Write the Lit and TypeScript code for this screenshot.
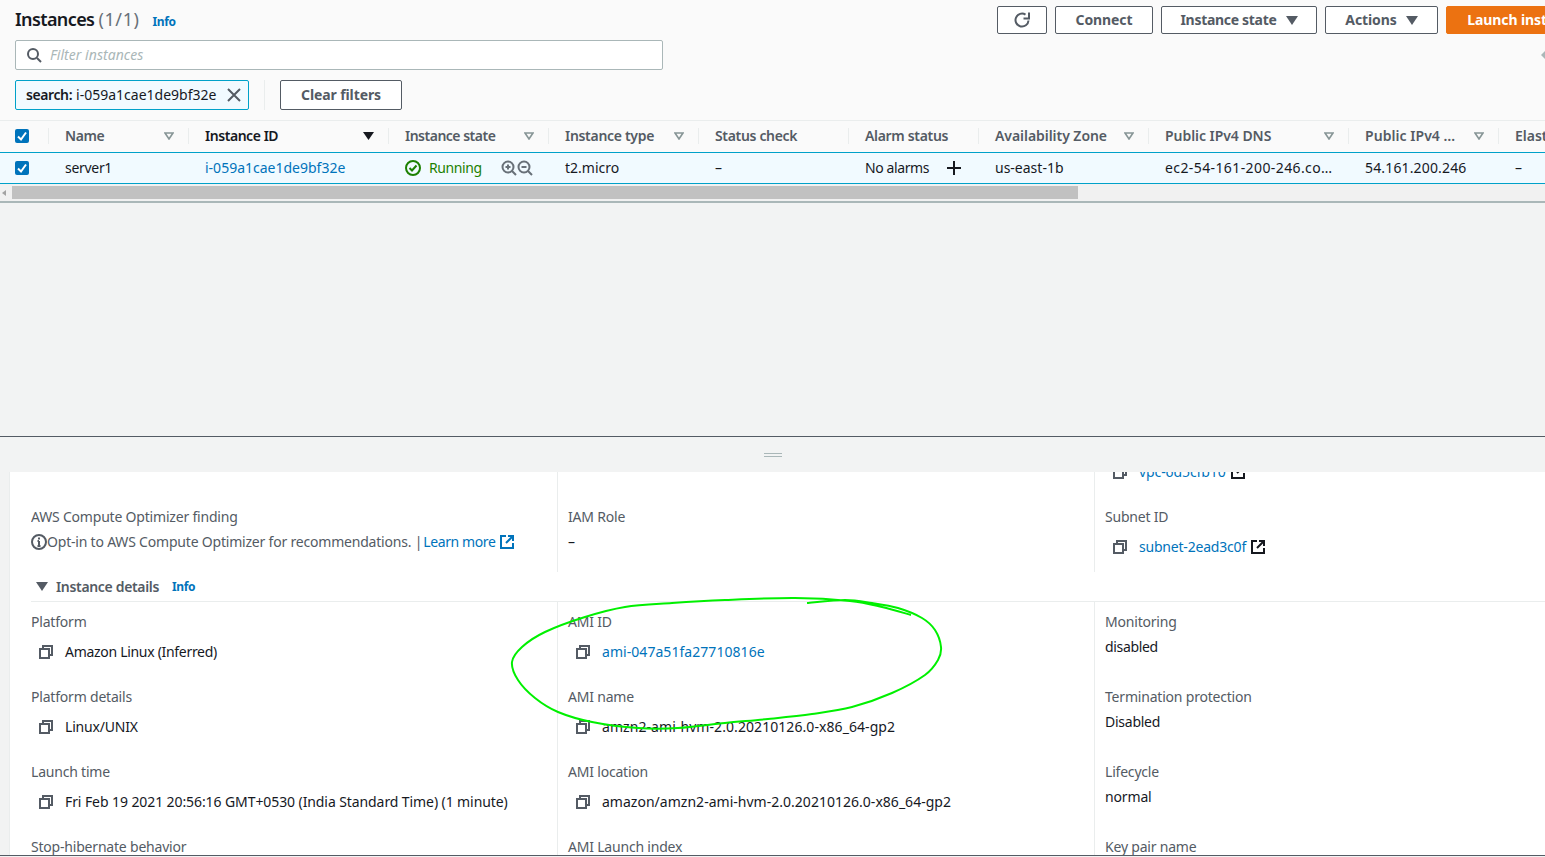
import { LitElement, html, css, svg } from "lit";
import { customElement } from "lit/decorators.js";

const copyIcon = html`<svg class="ic copy" viewBox="0 0 14 14" width="14" height="14" fill="none" stroke="#545b64" stroke-width="2"><rect x="1" y="4" width="9" height="9"/><path d="M4 4V1h9v9h-3"/></svg>`;
const extIcon = (c: string) => html`<svg class="ic" viewBox="0 0 14 14" width="14" height="14" fill="none" stroke=${c} stroke-width="2"><path d="M6 1H1v12h12V8"/><path d="M8 1h5v5M13 1L6 8"/></svg>`;
const filterIcon = html`<svg class="ic" viewBox="0 0 10 8" width="10" height="8" fill="none" stroke="#879596" stroke-width="1.6"><path d="M1 1h8L5 7z"/></svg>`;
const caret = (c: string, w = 10, h = 8) => html`<svg class="ic" viewBox="0 0 10 8" width=${w} height=${h} preserveAspectRatio="none"><path d="M0 0h10L5 8z" fill=${c}/></svg>`;
const check = html`<span class="cb"><svg viewBox="0 0 14 14" width="14" height="14" fill="none" stroke="#fff" stroke-width="2"><path d="M3 7.5l3 3 5-7"/></svg></span>`;
const ls = (v: number) => `letter-spacing:${v}px`;

type Col = { w: number; t: string; sort: "filter" | "active" | "none"; s: number };
const cols: Col[] = [
  { w: 140, t: "Name", sort: "filter", s: -0.4 },
  { w: 200, t: "Instance ID", sort: "active", s: -0.45 },
  { w: 160, t: "Instance state", sort: "filter", s: -0.5 },
  { w: 150, t: "Instance type", sort: "filter", s: -0.3 },
  { w: 150, t: "Status check", sort: "none", s: -0.33 },
  { w: 130, t: "Alarm status", sort: "none", s: -0.33 },
  { w: 170, t: "Availability Zone", sort: "filter", s: -0.05 },
  { w: 200, t: "Public IPv4 DNS", sort: "filter", s: -0.05 },
  { w: 150, t: "Public IPv4 …", sort: "filter", s: 0.05 },
  { w: 200, t: "Elastic IP", sort: "none", s: 0 },
];
const template = "48px " + cols.map((c) => c.w + "px").join(" ");

type Item = { l: string; v: string; copy?: boolean; link?: boolean; s?: number };
const rows: Item[] = [
  { l: "Platform", v: "Amazon Linux (Inferred)", copy: true, s: -0.3 },
  { l: "AMI ID", v: "ami-047a51fa27710816e", copy: true, link: true, s: 0.05 },
  { l: "Monitoring", v: "disabled", s: -0.35 },
  { l: "Platform details", v: "Linux/UNIX", copy: true, s: -0.2 },
  { l: "AMI name", v: "amzn2-ami-hvm-2.0.20210126.0-x86_64-gp2", copy: true, s: 0.07 },
  { l: "Termination protection", v: "Disabled", s: -0.25 },
  { l: "Launch time", v: "Fri Feb 19 2021 20:56:16 GMT+0530 (India Standard Time) (1 minute)", copy: true, s: -0.09 },
  { l: "AMI location", v: "amazon/amzn2-ami-hvm-2.0.20210126.0-x86_64-gp2", copy: true, s: 0.02 },
  { l: "Lifecycle", v: "normal", s: -0.15 },
  { l: "Stop-hibernate behavior", v: "" },
  { l: "AMI Launch index", v: "" },
  { l: "Key pair name", v: "" },
];

const inkLoop: [number, number][] = [
  [911, 615], [882, 607], [850, 601], [795, 598], [725, 600], [672, 603], [625, 607], [585, 617], [545, 632],
  [522, 647], [512, 662], [518, 680], [535, 698], [558, 712], [592, 722], [638, 728], [678, 728], [725, 723],
  [768, 719], [812, 714], [852, 707], [892, 693], [925, 675], [938, 660], [941, 647], [935, 630], [922, 618],
  [898, 608], [872, 603], [845, 600], [807, 603],
];
function smooth(p: [number, number][]) {
  let d = `M${p[0][0]} ${p[0][1]}`;
  for (let i = 0; i < p.length - 1; i++) {
    const a = p[Math.max(i - 1, 0)], b = p[i], c = p[i + 1], e = p[Math.min(i + 2, p.length - 1)];
    d += `C${b[0] + (c[0] - a[0]) / 6} ${b[1] + (c[1] - a[1]) / 6} ${c[0] - (e[0] - b[0]) / 6} ${c[1] - (e[1] - b[1]) / 6} ${c[0]} ${c[1]}`;
  }
  return d;
}

@customElement("app-root")
export class AppRoot extends LitElement {
  static styles = css`
    :host { display: block; width: 100%; height: 857px; overflow: hidden; position: relative;
      font-family: "Noto Sans", sans-serif; font-size: 14px; line-height: 20px; color: #16191f; background: #f2f3f3; }
    .top { background: #fafafa; height: 120px; box-sizing: border-box; padding: 6px 0 0 15px; position: relative; }
    .head { display: flex; height: 28px; align-items: center; gap: 8px; }
    .title { flex: 0 0 974px; display: flex; align-items: baseline; margin-top: -2px; }
    h1 { margin: 0; font-size: 18px; line-height: 24px; font-weight: 600; color: #16191f; letter-spacing: -0.6px; }
    h1 span { font-weight: 400; color: #687078; letter-spacing: 0.6px; }
    .info { font-size: 12px; font-weight: 700; color: #0073bb; margin-left: 13px; letter-spacing: -0.4px; }
    .btn { box-sizing: border-box; height: 28px; border: 1px solid #545b64; border-radius: 2px; background: #fff; color: #545b64;
      font-weight: 700; font-size: 14px; display: flex; align-items: center; justify-content: center; gap: 9px; flex: none; white-space: nowrap; letter-spacing: -0.1px; }
    .wide { letter-spacing: -0.3px; }
    .w50 { width: 50px; } .w98 { width: 98px; } .w156 { width: 156px; } .w113 { width: 113px; }
    .primary { background: #ec7211; border-color: #ec7211; color: #fff; width: 162px; }
    .filter { box-sizing: border-box; width: 648px; height: 30px; margin-top: 6px; background: #fff; border: 1px solid #aab7b8; border-radius: 2px;
      display: flex; align-items: center; padding-left: 10px; gap: 8px; color: #aab7b8; font-style: italic; letter-spacing: 0.05px; }
    .chips { display: flex; margin-top: 10px; align-items: stretch; height: 30px; }
    .token { box-sizing: border-box; width: 234px; border: 1px solid #00a1c9; border-radius: 2px; background: #f1faff; display: flex; align-items: center; padding-left: 10px; white-space: nowrap; }
    .token b { font-weight: 600; margin-right: 4px; letter-spacing: -0.4px; }
    .token svg { margin-left: 11px; }
    .sep { width: 1px; background: #eaeded; margin: 0 15px; }
    .clear { width: 122px; height: 30px; }
    .collapse { position: absolute; right: 0; top: 51px; width: 4px; height: 8px; overflow: hidden; }
    .collapse i { display: block; width: 0; height: 0; border: 4px solid transparent; border-right-color: #aab7b8; border-left: 0; }

    .thead, .row { display: grid; align-items: center; width: 1545px; overflow: hidden; box-sizing: border-box; }
    .thead { height: 32px; background: #fafafa; border-top: 1px solid #eaeded; padding-bottom: 1px; color: #545b64; font-weight: 600; }
    .row { height: 32px; background: #f1faff; border-top: 1px solid #00a1c9; border-bottom: 1px solid #00a1c9; }
    .cbc { padding-left: 15px; display: flex; }
    .cb { display: block; width: 14px; height: 14px; background: #0073bb; border-radius: 2px; }
    .cb svg { display: block; }
    .th { height: 16px; box-sizing: border-box; border-left: 1px solid #eaeded; padding: 0 14px 0 16px; display: flex; align-items: center; justify-content: space-between; white-space: nowrap; }
    .th.active { color: #16191f; }
    .td { padding-left: 17px; white-space: nowrap; display: flex; align-items: center; }
    .link { color: #0073bb; }
    .ok { color: #1d8102; display: flex; align-items: center; gap: 8px; letter-spacing: -0.4px; }
    .zoom { display: flex; margin-left: 19px; }
    .plus { margin-left: 17px; }
    .t1 { letter-spacing: -0.3px; }
    .t2 { letter-spacing: -0.4px; }
    .t3 { letter-spacing: 0.4px; }
    .t4 { letter-spacing: 0.15px; }

    .scroll { height: 17px; background: #f1f1f1; display: flex; align-items: center; }
    .arrow { width: 0; height: 0; border: 3px solid transparent; border-right: 4px solid #a3a3a3; border-left: 0; margin-left: 2px; }
    .thumb { width: 1066px; height: 13px; background: #c1c1c1; margin-left: 6px; }
    .scrollend { height: 2px; background: #aab7b8; }

    .spacer { height: 233px; background: #f2f3f3; }
    .rule { height: 1px; background: #545b64; }
    .split { height: 35px; display: flex; align-items: center; justify-content: center; background: #f2f3f3; }
    .grip { width: 18px; height: 4px; box-sizing: border-box; border-top: 1px solid #aab7b8; border-bottom: 1px solid #aab7b8; }

    .pane { height: 383px; overflow: hidden; display: flex; background: #f2f3f3; }
    .panel { flex: 1; background: #fff; border-left: 1px solid #eaeded; margin-left: 9px; padding-left: 21px; min-width: 0; }
    .g { display: grid; grid-template-columns: 526px 537px 1fr; }
    .c { border-left: 1px solid #eaeded; padding-left: 10px; height: 100%; box-sizing: border-box; white-space: nowrap; color: #16191f; }
    .c:nth-child(3n+1) { border-left: 0; padding-left: 0; }
    .g1 { height: 100px; overflow: hidden; }
    .top35 { height: 35px; }
    .top25 { height: 25px; }
    .clipval { display: flex; align-items: center; height: 20px; margin-top: -10px; padding-left: 8px; }
    .clipval .blue { margin-left: 12px; letter-spacing: -0.1px; }
    .lab { color: #545b64; line-height: 20px; letter-spacing: -0.2px; }
    .val { margin-top: 5px; line-height: 20px; color: #16191f; }
    .muted { color: #545b64; display: flex; align-items: center; letter-spacing: -0.2px; }
    .learn { margin-left: 1px; letter-spacing: -0.4px; }
    .learnicon { display: flex; margin-left: 5px; }
    .valc { display: flex; align-items: center; height: 30px; padding-left: 8px; margin-top: 5px; }
    .valc .ic.copy { margin-right: 12px; }
    .sub { letter-spacing: -0.2px; }
    .x { margin-left: 5px; display: flex; }
    .sec { height: 30px; display: flex; align-items: center; border-bottom: 1px solid #eaeded; box-sizing: border-box; font-weight: 600; color: #545b64; padding-left: 5px; letter-spacing: -0.33px; }
    .sec .ic { margin-right: 8px; }
    .g2 { grid-auto-rows: 75px; }
    .g2 .c { padding-top: 10px; }
    .blue { color: #0073bb; }
    .bottomline { height: 1px; background: #545b64; }
    .ink { position: absolute; left: 0; top: 0; pointer-events: none; }
  `;

  private item(i: Item) {
    const s = ls(i.s ?? 0);
    return html`<div class="c">
      <div class="lab">${i.l}</div>
      ${i.copy
        ? html`<div class="valc">${copyIcon}<span class=${i.link ? "blue" : ""} style=${s}>${i.v}</span></div>`
        : html`<div class="val" style=${s}>${i.v}</div>`}
    </div>`;
  }

  render() {
    return html`
      <div class="top">
        <div class="head">
          <div class="title"><h1>Instances <span>(1/1)</span></h1><span class="info">Info</span></div>
          <div class="btn w50">
            <svg viewBox="0 0 16 16" width="16" height="16" fill="none" stroke="#545b64" stroke-width="2"><path d="M11.5 2.6A6.5 6.5 0 1 0 14.5 8.5"/><path d="M15 0.5V6.5H9.5"/></svg>
          </div>
          <div class="btn w98">Connect</div>
          <div class="btn wide w156">Instance state ${caret("#545b64", 12, 9)}</div>
          <div class="btn w113">Actions ${caret("#545b64", 12, 9)}</div>
          <div class="btn primary">Launch instances</div>
        </div>
        <div class="filter">
          <svg viewBox="0 0 16 16" width="16" height="16" fill="none" stroke="#545b64" stroke-width="2"><circle cx="7" cy="7" r="5"/><path d="M11 11l4 4"/></svg>
          Filter instances
        </div>
        <div class="chips">
          <div class="token"><b>search:</b> i-059a1cae1de9bf32e
            <svg viewBox="0 0 14 14" width="14" height="14" fill="none" stroke="#545b64" stroke-width="2"><path d="M1 1l12 12M13 1L1 13"/></svg>
          </div>
          <div class="sep"></div>
          <div class="btn clear">Clear filters</div>
        </div>
        <div class="collapse"><i></i></div>
      </div>

      <div class="thead" style="grid-template-columns:${template}">
        <div class="cbc">${check}</div>
        ${cols.map((c) => html`<div class="th ${c.sort === "active" ? "active" : ""}"><span style=${ls(c.s)}>${c.t}</span>${c.sort === "filter" ? filterIcon : c.sort === "active" ? caret("#16191f", 11, 8) : ""}</div>`)}
      </div>
      <div class="row" style="grid-template-columns:${template}">
        <div class="cbc">${check}</div>
        <div class="td t1">server1</div>
        <div class="td link">i-059a1cae1de9bf32e</div>
        <div class="td"><span class="ok">
          <svg viewBox="0 0 16 16" width="16" height="16" fill="none" stroke="#1d8102" stroke-width="2"><circle cx="8" cy="8" r="7"/><path d="M4.5 8l2.5 2.5 4.5-5"/></svg>Running</span>
          <span class="zoom">
            <svg viewBox="0 0 16 16" width="16" height="16" fill="none" stroke="#687078" stroke-width="2"><circle cx="7" cy="7" r="5.5"/><path d="M11 11l4 4M4.5 7h5M7 4.5v5"/></svg>
            <svg viewBox="0 0 16 16" width="16" height="16" fill="none" stroke="#687078" stroke-width="2"><circle cx="7" cy="7" r="5.5"/><path d="M11 11l4 4M4.5 7h5"/></svg>
          </span>
        </div>
        <div class="td">t2.micro</div>
        <div class="td">–</div>
        <div class="td"><span class="t2">No alarms</span>
          <svg class="plus" viewBox="0 0 16 16" width="16" height="16" fill="none" stroke="#16191f" stroke-width="2"><path d="M8 1v14M1 8h14"/></svg>
        </div>
        <div class="td">us-east-1b</div>
        <div class="td t3">ec2-54-161-200-246.co…</div>
        <div class="td t4">54.161.200.246</div>
        <div class="td">–</div>
      </div>
      <div class="scroll"><span class="arrow"></span><div class="thumb"></div></div>
      <div class="scrollend"></div>
      <div class="spacer"></div>
      <div class="rule"></div>
      <div class="split"><div class="grip"></div></div>

      <div class="pane">
        <div class="panel">
          <div class="g g1">
            <div class="c">
              <div class="top35"></div>
              <div class="lab">AWS Compute Optimizer finding</div>
              <div class="val muted">
                <svg viewBox="0 0 16 16" width="16" height="16" fill="none" stroke="#545b64" stroke-width="2"><circle cx="8" cy="8" r="7"/><path d="M8 7v5M6.5 12h3M6.5 7H8M8 3.5v2"/></svg>Opt-in to AWS Compute Optimizer for recommendations. |<span class="blue learn">Learn more</span><span class="learnicon">${extIcon("#0073bb")}</span>
              </div>
            </div>
            <div class="c">
              <div class="top35"></div>
              <div class="lab">IAM Role</div>
              <div class="val">–</div>
            </div>
            <div class="c">
              <div class="clipval">${copyIcon}<span class="blue">vpc-6d5cfb10</span><span class="x">${extIcon("#16191f")}</span></div>
              <div class="top25"></div>
              <div class="lab">Subnet ID</div>
              <div class="valc">${copyIcon}<span class="blue sub">subnet-2ead3c0f</span><span class="x">${extIcon("#16191f")}</span></div>
            </div>
          </div>
          <div class="sec">${caret("#545b64", 12, 9)}Instance details <span class="info">Info</span></div>
          <div class="g g2">${rows.map((r) => this.item(r))}</div>
        </div>
      </div>
      <div class="bottomline"></div>

      <svg class="ink" width="1545" height="857" fill="none" stroke="#00f000" stroke-width="2">
        ${svg`<path d=${smooth(inkLoop)}/>`}
      </svg>
    `;
  }
}
